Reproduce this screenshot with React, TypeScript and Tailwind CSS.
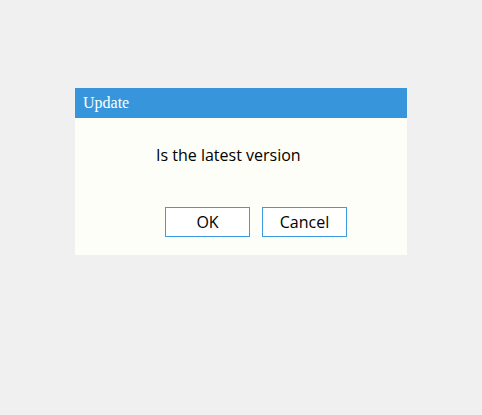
export default function App() {
  return (
    <div className="h-[415px] w-[482px] bg-[#f0f0f0] pt-[88px] pl-[75px]">
      <div className="flex h-[167px] w-[332px] flex-col bg-[#fefef8]">
        <div className="flex h-[30px] items-center bg-[#3796db] pl-2 font-['Liberation_Serif',serif] text-[16px] text-white">
          Update
        </div>
        <div className="pt-[27px] pl-[81px] font-['Open_Sans',sans-serif] text-[16px] leading-5 text-black">
          Is the latest version
        </div>
        <div className="mt-[42px] flex gap-3 pl-[90px] font-['Open_Sans',sans-serif] text-[16px] text-black">
          <button className="h-[30px] w-[85px] border border-[#3c9ae0] bg-white">OK</button>
          <button className="h-[30px] w-[85px] border border-[#3c9ae0] bg-white">Cancel</button>
        </div>
      </div>
    </div>
  );
}
